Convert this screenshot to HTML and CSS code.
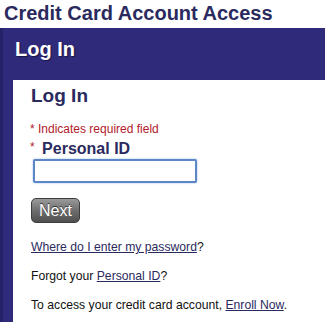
FILE: index.html
```html
<!DOCTYPE html>
<html lang="en">

<head>
  <meta charset="UTF-8">
  <meta name="viewport" content="width=device-width, initial-scale=1.0">
  <title>Credit Card Account Access</title>
  <link rel="stylesheet" href="styles.css">
</head>

<body>
  <h1 class="site-title">Credit Card Account Access</h1>
  <div class="box">
    <div class="box-head">Log In</div>
    <div class="panel">
      <h2 class="panel-title">Log In</h2>
      <p class="required"><span class="star">*</span> Indicates required field</p>
      <label class="field-label" for="pid"><span class="star">*</span> Personal ID</label>
      <input id="pid" class="field" type="text">
      <button class="btn-next">Next</button>
      <p class="help"><a href="#">Where do I enter my password</a>?</p>
      <p class="help">Forgot your <a href="#">Personal ID</a>?</p>
      <p class="help">To access your credit card account, <a href="#">Enroll Now</a>.</p>
    </div>
  </div>
</body>

</html>
```

FILE: styles.css
```css
body {
  margin: 0;
  font-family: "Liberation Sans", Arial, sans-serif;
  background: #fff;
  color: #111;
}

.site-title {
  margin: 0;
  padding: 1px 4px 3px;
  font-size: 20px;
  line-height: 24px;
  color: #2b2a5e;
}

.box {
  background: #2f2a7a;
  padding-left: 13px;
  box-shadow: inset 3px 0 0 #262269;
  /* 紫色框一直延伸到底部 */
  min-height: 294px;
}

.box-head {
  height: 52px;
  box-sizing: border-box;
  padding: 9px 0 0 2px;
  font-size: 20px;
  line-height: 24px;
  font-weight: bold;
  color: #fff;
  text-shadow: 1px 1px 1px #1a1746;
}

.panel {
  background: #fff;
  padding: 5px 0 20px 18px;
  min-height: 217px;
}

.panel-title {
  margin: 0;
  font-size: 19px;
  line-height: 22px;
  color: #2b2a5e;
}

.required {
  margin: 15px 0 0 -1px;
  font-size: 12px;
  line-height: 14px;
  color: #b3202c;
}

.star {
  color: #b3202c;
  font-size: 12px;
}

.field-label {
  display: block;
  margin: 2px 0 0 -1px;
  font-size: 16px;
  line-height: 18px;
  font-weight: bold;
  color: #2b2a5e;
}

.field-label .star {
  vertical-align: 3px;
  font-weight: normal;
  margin-right: 3px;
}

.field {
  display: block;
  box-sizing: border-box;
  width: 164px;
  height: 24px;
  margin: 1px 0 0 2px;
  border: 2px solid #5d86c6;
  border-radius: 2px;
  box-shadow: 0 0 2px #8fb0e0;
  outline: none;
}

.btn-next {
  display: block;
  box-sizing: border-box;
  width: 49px;
  height: 25px;
  margin-top: 15px;
  padding: 0;
  border: 1px solid #3e3e3e;
  border-radius: 5px;
  background: linear-gradient(#9a9a9a, #6e6e6e 50%, #4f4f4f);
  color: #fff;
  font-family: "Liberation Sans", Arial, sans-serif;
  font-size: 16px;
  text-shadow: 0 -1px 0 #333;
  cursor: pointer;
}

.help {
  margin: 17px 0 0;
  font-size: 12.2px;
  line-height: 14px;
}

.help + .help {
  margin-top: 15px;
}

.help a {
  color: #2b2a5e;
}
```
